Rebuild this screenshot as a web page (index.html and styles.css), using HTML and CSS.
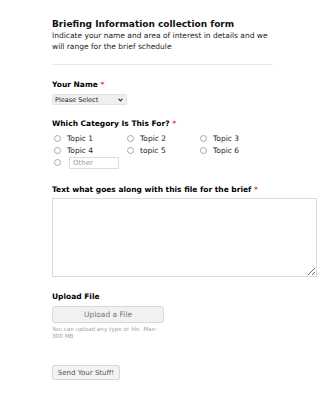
FILE: index.html
```html
<!DOCTYPE html>
<html lang="en">
<head>
    <meta charset="UTF-8">
    <meta name="viewport" content="width=device-width, initial-scale=1.0">
    <title>Briefing Information collection form</title>
    <link rel="stylesheet" href="styles.css">
</head>
<body>

    <form class="form">
        <div class="form-header">
            <h1>Briefing Information collection form</h1>
            <p>Indicate your name and area of interest in details and we will range for the brief schedule</p>
        </div>

        <div class="field">
            <label class="field-label">Your Name <span class="req">*</span></label>
            <div class="select-wrap">
                <select class="name-select">
                    <option>Please Select</option>
                </select>
                <svg class="chevron" width="5" height="4" viewBox="0 0 5 4">
                    <path d="M0.6 0.8 L2.5 2.8 L4.4 0.8" fill="none" stroke="#222" stroke-width="1.1"/>
                </svg>
            </div>
        </div>

        <div class="field">
            <label class="field-label">Which Category Is This For? <span class="req">*</span></label>
            <div class="radio-grid">
                <label class="radio"><span class="dot"></span>Topic 1</label>
                <label class="radio"><span class="dot"></span>Topic 2</label>
                <label class="radio"><span class="dot"></span>Topic 3</label>
                <label class="radio"><span class="dot"></span>Topic 4</label>
                <label class="radio"><span class="dot"></span>topic 5</label>
                <label class="radio"><span class="dot"></span>Topic 6</label>
                <label class="radio other"><span class="dot"></span><input type="text" placeholder="Other"></label>
            </div>
        </div>

        <div class="field">
            <label class="field-label">Text what goes along with this file for the brief <span class="req">*</span></label>
            <textarea class="brief-text"></textarea>
        </div>

        <div class="field">
            <label class="field-label">Upload File</label>
            <div class="upload">
                <button type="button" class="upload-btn">Upload a File</button>
                <p class="upload-note">You can upload any type of file. Max: 300 MB</p>
            </div>
        </div>

        <button type="button" class="submit-btn">Send Your Stuff!</button>
    </form>

</body>
</html>
```

FILE: styles.css
```css
body {
    margin: 0;
    padding: 0;
    background-color: #FFFFFF;
    font-family: 'DejaVu Sans', Verdana, sans-serif;
    color: #111111;
}
.form {
    width: 265px;
    padding: 18px 0 0 52px;
}
.form-header {
    width: 221px;
    padding-bottom: 12px;
    border-bottom: 1px solid #E8E8E8;
}
.form-header h1 {
    margin: 0;
    font-size: 9px;
    line-height: 12px;
    font-weight: bold;
    color: #111111;
}
.form-header p {
    margin: 0;
    font-size: 7.5px;
    line-height: 11px;
    color: #222222;
}
.field {
    margin-top: 15px;
}
.field-label {
    display: block;
    font-size: 7.5px;
    line-height: 10px;
    font-weight: bold;
    color: #000000;
}
.req {
    color: #F23A3C;
}
.select-wrap {
    position: relative;
    width: 75px;
    margin-top: 4px;
}
.name-select {
    display: block;
    width: 75px;
    height: 11px;
    padding: 0 2px;
    appearance: none;
    -webkit-appearance: none;
    font-family: 'DejaVu Sans', Verdana, sans-serif;
    font-size: 6.5px;
    color: #222222;
    background-color: #EFEFEF;
    border: 1px solid #E4E4E4;
    border-radius: 1px;
}
.chevron {
    position: absolute;
    right: 4px;
    top: 4px;
}
.radio-grid {
    display: grid;
    grid-template-columns: 73px 73px 73px;
    margin-top: 3px;
    padding-left: 2px;
}
.radio {
    display: flex;
    align-items: center;
    height: 12px;
    font-size: 7.5px;
    color: #222222;
}
.dot {
    width: 5px;
    height: 5px;
    border: 1px solid #A8A8A8;
    border-radius: 50%;
    margin-right: 6px;
    flex-shrink: 0;
}
.other {
    height: 13px;
}
.other input {
    width: 50px;
    height: 12px;
    box-sizing: border-box;
    margin-left: 2px;
    padding: 0 3px;
    border: 1px solid #DDDDDD;
    font-family: 'DejaVu Sans', Verdana, sans-serif;
    font-size: 7px;
}
.other input::placeholder {
    color: #A0A0A0;
}
.brief-text {
    display: block;
    margin-top: 3px;
    width: 265px;
    height: 79px;
    box-sizing: border-box;
    border: 1px solid #DADADA;
}
.field:nth-child(3) {
    margin-top: 14px;
}
.field:nth-child(4) {
    margin-top: 16px;
}
.upload {
    width: 112px;
    margin-top: 4px;
}
.upload-btn {
    display: block;
    width: 112px;
    height: 17px;
    background-color: #F1F1F1;
    border: 1px solid #D8D8D8;
    border-radius: 3px;
    font-family: 'DejaVu Sans', Verdana, sans-serif;
    font-size: 7.5px;
    color: #777777;
}
.upload-note {
    margin: 3px 0 0 0;
    font-size: 5.7px;
    line-height: 7px;
    color: #A5A5A5;
}
.submit-btn {
    display: block;
    margin-top: 25px;
    width: 68px;
    height: 15px;
    padding: 0;
    background-color: #F3F3F3;
    border: 1px solid #D8D8D8;
    border-radius: 2px;
    font-family: 'DejaVu Sans', Verdana, sans-serif;
    font-size: 7px;
    color: #555555;
}
```
